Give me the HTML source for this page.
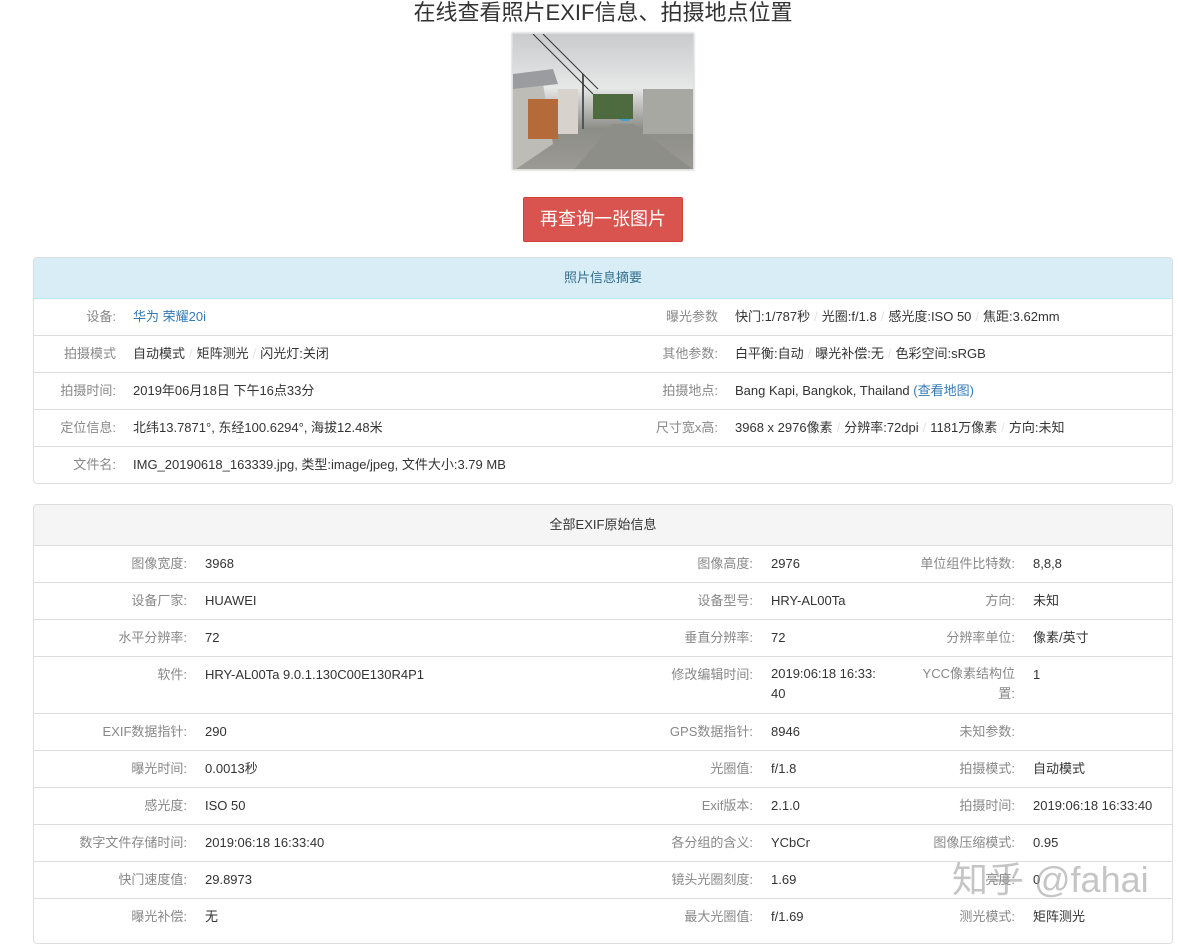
<!DOCTYPE html>
<html><head><meta charset="utf-8">
<style>
*{margin:0;padding:0;box-sizing:border-box}
body{width:1178px;height:928px;overflow:hidden;background:#fff;font-family:"Liberation Sans","Noto Sans CJK SC",sans-serif;font-size:13px;color:#333;position:relative}
.title{position:absolute;top:0;left:0;width:1206px;text-align:center;font-size:22px;line-height:26px;color:#333}
.photo{position:absolute;left:512px;top:33px;width:182px;height:137px;border:1px solid #ddd;box-shadow:0 0 2px #bbb;overflow:hidden;background:linear-gradient(#c9cbcc 0%,#e6e7e7 40%,#b9bab6 55%,#8d8d88 70%,#9b9a95 100%)}
.btn{position:absolute;left:523px;top:197px;width:160px;height:45px;background:#d9534f;border:1px solid #d43f3a;color:#fff;font-size:18px;text-align:center;line-height:43px;border-radius:2px}
.panel{position:absolute;left:33px;width:1140px;border:1px solid #ddd;border-radius:4px;overflow:hidden}
.ph{height:41px;line-height:40px;text-align:center;border-bottom:1px solid #ddd}
.row{position:relative;border-top:1px solid #ddd;height:37px}
.ph + .row{border-top:none;height:36px}
.c{position:absolute;top:9px;line-height:17px;white-space:nowrap}
.l{color:#888;text-align:right}
.s{color:#e4e4e4;margin:0 4px}
a{color:#337ab7;text-decoration:none}
</style></head><body>
<div class="title">在线查看照片EXIF信息、拍摄地点位置</div>
<div class="photo">
<svg width="182" height="137" viewBox="0 0 182 137">
<polygon points="0,50 30,50 40,110 0,137" fill="#bdbcb6"/>
<rect x="15" y="65" width="30" height="40" fill="#b56a3a"/>
<polygon points="0,40 40,35 45,50 0,55" fill="#9a9c9f"/>
<rect x="45" y="55" width="20" height="45" fill="#d7d3cc"/>
<polygon points="60,137 100,90 120,90 182,137" fill="#8e8e89"/>
<rect x="105" y="75" width="14" height="12" rx="5" fill="#3da3d8"/>
<rect x="130" y="55" width="52" height="45" fill="#a7a8a2"/>
<rect x="80" y="60" width="40" height="25" fill="#4e6a3f"/>
<line x1="70" y1="40" x2="70" y2="95" stroke="#555" stroke-width="2"/>
<line x1="20" y1="0" x2="80" y2="60" stroke="#333"/>
<line x1="30" y1="0" x2="85" y2="55" stroke="#333"/>
</svg></div>
<div class="btn">再查询一张图片</div>

<div class="panel" style="top:257px;height:227px">
<div class="ph" style="background:#d9edf7;color:#31708f;border-color:#bce8f1">照片信息摘要</div>
<div class="row"><div class="c l" style="right:1056px">设备:</div><div class="c" style="left:99px"><a>华为 荣耀20i</a></div><div class="c l" style="right:454px">曝光参数</div><div class="c" style="left:701px">快门:1/787秒<span class="s">/</span>光圈:f/1.8<span class="s">/</span>感光度:ISO 50<span class="s">/</span>焦距:3.62mm</div></div>
<div class="row"><div class="c l" style="right:1056px">拍摄模式</div><div class="c" style="left:99px">自动模式<span class="s">/</span>矩阵测光<span class="s">/</span>闪光灯:关闭</div><div class="c l" style="right:454px">其他参数:</div><div class="c" style="left:701px">白平衡:自动<span class="s">/</span>曝光补偿:无<span class="s">/</span>色彩空间:sRGB</div></div>
<div class="row"><div class="c l" style="right:1056px">拍摄时间:</div><div class="c" style="left:99px">2019年06月18日 下午16点33分</div><div class="c l" style="right:454px">拍摄地点:</div><div class="c" style="left:701px">Bang Kapi, Bangkok, Thailand <a>(查看地图)</a></div></div>
<div class="row"><div class="c l" style="right:1056px">定位信息:</div><div class="c" style="left:99px">北纬13.7871°, 东经100.6294°, 海拔12.48米</div><div class="c l" style="right:454px">尺寸宽x高:</div><div class="c" style="left:701px">3968 x 2976像素<span class="s">/</span>分辨率:72dpi<span class="s">/</span>1181万像素<span class="s">/</span>方向:未知</div></div>
<div class="row"><div class="c l" style="right:1056px">文件名:</div><div class="c" style="left:99px">IMG_20190618_163339.jpg, 类型:image/jpeg, 文件大小:3.79 MB</div></div>
</div>

<div class="panel" style="top:504px;height:440px">
<div class="ph" style="background:#f5f5f5">全部EXIF原始信息</div>
<div class="row"><div class="c l" style="right:985px">图像宽度:</div><div class="c" style="left:171px">3968</div><div class="c l" style="right:419px">图像高度:</div><div class="c" style="left:737px">2976</div><div class="c l" style="right:157px">单位组件比特数:</div><div class="c" style="left:999px">8,8,8</div></div>
<div class="row"><div class="c l" style="right:985px">设备厂家:</div><div class="c" style="left:171px">HUAWEI</div><div class="c l" style="right:419px">设备型号:</div><div class="c" style="left:737px">HRY-AL00Ta</div><div class="c l" style="right:157px">方向:</div><div class="c" style="left:999px">未知</div></div>
<div class="row"><div class="c l" style="right:985px">水平分辨率:</div><div class="c" style="left:171px">72</div><div class="c l" style="right:419px">垂直分辨率:</div><div class="c" style="left:737px">72</div><div class="c l" style="right:157px">分辨率单位:</div><div class="c" style="left:999px">像素/英寸</div></div>
<div class="row" style="height:57px"><div class="c l" style="right:985px">软件:</div><div class="c" style="left:171px">HRY-AL00Ta 9.0.1.130C00E130R4P1</div><div class="c l" style="right:419px">修改编辑时间:</div><div class="c" style="left:737px;line-height:20px;top:7px">2019:06:18 16:33:<br>40</div><div class="c l" style="right:157px;line-height:20px;top:7px">YCC像素结构位<br>置:</div><div class="c" style="left:999px">1</div></div>
<div class="row"><div class="c l" style="right:985px">EXIF数据指针:</div><div class="c" style="left:171px">290</div><div class="c l" style="right:419px">GPS数据指针:</div><div class="c" style="left:737px">8946</div><div class="c l" style="right:157px">未知参数:</div></div>
<div class="row"><div class="c l" style="right:985px">曝光时间:</div><div class="c" style="left:171px">0.0013秒</div><div class="c l" style="right:419px">光圈值:</div><div class="c" style="left:737px">f/1.8</div><div class="c l" style="right:157px">拍摄模式:</div><div class="c" style="left:999px">自动模式</div></div>
<div class="row"><div class="c l" style="right:985px">感光度:</div><div class="c" style="left:171px">ISO 50</div><div class="c l" style="right:419px">Exif版本:</div><div class="c" style="left:737px">2.1.0</div><div class="c l" style="right:157px">拍摄时间:</div><div class="c" style="left:999px">2019:06:18 16:33:40</div></div>
<div class="row"><div class="c l" style="right:985px">数字文件存储时间:</div><div class="c" style="left:171px">2019:06:18 16:33:40</div><div class="c l" style="right:419px">各分组的含义:</div><div class="c" style="left:737px">YCbCr</div><div class="c l" style="right:157px">图像压缩模式:</div><div class="c" style="left:999px">0.95</div></div>
<div class="row"><div class="c l" style="right:985px">快门速度值:</div><div class="c" style="left:171px">29.8973</div><div class="c l" style="right:419px">镜头光圈刻度:</div><div class="c" style="left:737px">1.69</div><div class="c l" style="right:157px">亮度:</div><div class="c" style="left:999px">0</div></div>
<div class="row"><div class="c l" style="right:985px">曝光补偿:</div><div class="c" style="left:171px">无</div><div class="c l" style="right:419px">最大光圈值:</div><div class="c" style="left:737px">f/1.69</div><div class="c l" style="right:157px">测光模式:</div><div class="c" style="left:999px">矩阵测光</div></div>
</div>
<div style="position:absolute;left:952px;top:858px;font-size:36px;line-height:44px;color:rgba(150,150,150,0.55);white-space:nowrap">知乎 @fahai</div>
</body></html>
